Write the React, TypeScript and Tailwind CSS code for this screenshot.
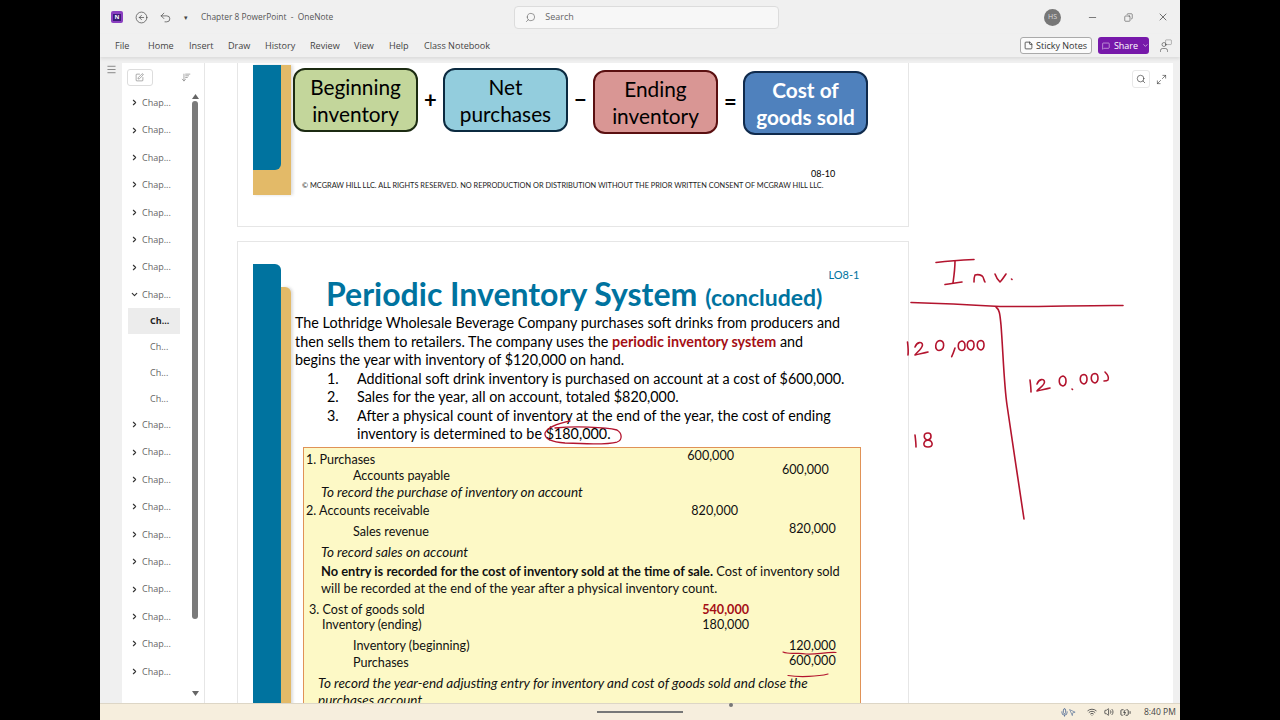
import React from "react";
import {
  CircleArrowLeft, Undo2, Search, Minus, Copy, X, Menu, SquarePen, ChevronRight, ChevronDown,
  ArrowDownWideNarrow, Maximize2, Mic, Navigation, Wifi, Volume2, BatteryCharging, StickyNote,
  MessageSquare, User,
} from "lucide-react";

const UI = "font-['Open_Sans','Noto_Sans',sans-serif]";
const SL = "font-['Lato','Noto_Sans',sans-serif]";

const tabs: [string, string][] = [
  ["File", "w-[33px]"], ["Home", "w-[41px]"], ["Insert", "w-[39px]"], ["Draw", "w-[37px]"], ["History", "w-[45px]"],
  ["Review", "w-[44px]"], ["View", "w-[35px]"], ["Help", "w-[35px]"], ["Class Notebook", "w-[68px]"],
];

function Section({ open, cls }: { open?: boolean; cls: string }) {
  return (
    <div className={`flex items-center ${cls}`}>
      <span className="w-[12px] flex justify-center">
        {open ? <ChevronDown size={9} strokeWidth={3} className="text-[#333]" /> : <ChevronRight size={9} strokeWidth={3} className="text-[#333]" />}
      </span>
      <span className="text-[9px] text-[#666] ml-[2px]">Chap...</span>
    </div>
  );
}

function Sub({ active }: { active?: boolean }) {
  return (
    <div className={`h-[26px] flex items-center pl-[22px] text-[9px] ${active ? "bg-[#ececec] font-bold text-[#222]" : "text-[#666]"}`}>Ch...</div>
  );
}

function Box({ a, b, cls }: { a: string; b: string; cls: string }) {
  return (
    <div className={`w-[125px] h-[64px] rounded-[12px] border-2 flex flex-col items-center justify-center text-[20.8px] leading-[27px] ${cls}`}>
      <span>{a}</span>
      <span>{b}</span>
    </div>
  );
}

function Row({ h, label, lc, d, dc, c, cc }: { h: string; label: React.ReactNode; lc: string; d?: string; dc?: string; c?: string; cc?: string }) {
  return (
    <div className={`flex items-start leading-[16px] whitespace-nowrap ${h}`}>
      <span className={`w-[360px] ${lc}`}>{label}</span>
      {d ? <span className={`w-[90px] text-right ${dc}`}>{d}</span> : null}
      {c ? <span className={`text-right ${cc}`}>{c}</span> : null}
    </div>
  );
}

function Ink() {
  return (
    <svg className="absolute inset-0 pointer-events-none" width="1280" height="720" viewBox="0 0 1280 720" fill="none" stroke="#b3142e" strokeWidth="1.6" strokeLinecap="round" strokeLinejoin="round">
      <path d="M936 262.5 C948 261 962 260 974 259.5" />
      <path d="M955 261 C955 268 954 276 953 283" />
      <path d="M945 284.5 C951 283.5 956 283 962 282" />
      <path d="M974 282 C974 278 974.5 276 975 275 C978 274 982 275 983 277 C984 279 984 281 985 282" />
      <path d="M995 274 C996 277 998 280 1000 282 C1002 280 1004 277 1006 274" />
      <path d="M1011.5 279 L1012 279.5" />
      <path d="M911 302.5 C930 303 975 305 1000 306.5 C1040 307 1090 305 1123 305.5" />
      <path d="M996 307 C1000 310 1000 316 1001 325 C1003 350 1004 385 1007 405 C1012 440 1019 485 1024 519" />
      <path d="M907.5 342 C908 346 908.5 351 908 355" />
      <path d="M915 347 C917 342 922 341 922.5 345 C922 349 917 352 915 355 C919 354 924 353 928 352" />
      <path d="M940 340.5 C935 341 934 350 939 350.5 C945 350 945 341 940 340.5Z" />
      <path d="M955 348 C954 351 953 354 951.7 356.7" />
      <path d="M962 341 C957 342 957 350 962 350.5 C966 350 966 342 962 341Z" />
      <path d="M971 340.5 C966 341 966 349 971 350 C975 349 975 341 971 340.5Z" />
      <path d="M981 340.5 C976 341 976 349 981 350 C985 349 985 341 981 340.5Z" />
      <path d="M1030 380 C1030.5 384 1031 388 1031 392" />
      <path d="M1037 384 C1039 379 1044 378 1044.5 382 C1044 386 1039 388 1037 391 C1041 390 1046 389 1050 388" />
      <path d="M1063 376 C1058 377 1058 385 1063 386 C1067 385 1067 377 1063 376Z" />
      <path d="M1072 389 L1072.5 389.5" />
      <path d="M1084 374.5 C1079 375 1079 383 1084 384 C1088 383 1088 375 1084 374.5Z" />
      <path d="M1095 373.5 C1090 374 1090 382 1095 383 C1099 382 1099 374 1095 373.5Z" />
      <path d="M1105 372 C1108 375 1109 378 1108 380 C1107 381 1105 381 1104 381" />
      <path d="M915 435 C915.5 439 916 443 916 447" />
      <path d="M928 433 C923 433 923 439 928 440 C933 441 934 447 928 447 C922 447 923 441 928 440 C932 439 932 433 928 433Z" />
      <path d="M570 421 C560 423 548 427 545 433 C544 439 552 442 565 443 C585 444 610 444 617 442 C623 440 622 433 617 430 C605 427 575 426 555 428" strokeWidth="1.3" />
      <path d="M783 652 C790 655 798 652 806 654 C815 655 825 652 836 652.5" strokeWidth="1.2" />
      <path d="M788 675.5 C800 677.5 818 676.5 828 674" strokeWidth="1.2" />
    </svg>
  );
}

export default function App() {
  return (
    <div className="relative w-[1280px] h-[720px] bg-black flex justify-center overflow-hidden">
      <div className={`w-[1080px] h-[720px] flex flex-col bg-[#f0f0f0] overflow-hidden ${UI}`}>
        {/* Title bar */}
        <div className="h-[34px] flex items-center text-[#444]">
          <div className="ml-[11px] w-[12px] h-[12px] rounded-[2px] bg-[#8a3fc0] flex items-center justify-center">
            <span className="w-[8px] h-[7px] bg-[#3b1a78] text-white text-[6px] leading-[7px] font-bold text-center">N</span>
          </div>
          <CircleArrowLeft size={13} strokeWidth={1.3} className="ml-[12px]" />
          <Undo2 size={13} strokeWidth={1.3} className="ml-[11px]" />
          <span className="ml-[12px] text-[7px] leading-none">▾</span>
          <span className="ml-[13px] text-[8.4px] text-[#555] whitespace-pre">Chapter 8 PowerPoint  -  OneNote</span>
          <div className="ml-[181px] w-[265px] h-[23px] rounded-[4px] bg-[#f7f7f7] border border-[#dcdcdc] flex items-center">
            <Search size={11} strokeWidth={1.4} className="ml-[10px] -scale-x-100 text-[#666]" />
            <span className="ml-[9px] text-[9px] text-[#666]">Search</span>
          </div>
          <div className="ml-auto w-[17px] h-[17px] rounded-full bg-[#777] text-[#ddd] text-[7px] flex items-center justify-center">HS</div>
          <Minus size={11} strokeWidth={1.5} className="ml-[26px]" />
          <Copy size={9} strokeWidth={1.5} className="ml-[26px] -scale-x-100" />
          <X size={12} strokeWidth={1.5} className="ml-[24px] mr-[11px]" />
        </div>
        {/* Ribbon */}
        <div className="h-[23px] flex items-center text-[#444] text-[9.1px] pl-[15px] shadow-[0_2px_3px_#dcdcdc] relative">
          {tabs.map(([t, w]) => (
            <span key={t} className={`${w} whitespace-nowrap`}>{t}</span>
          ))}
          <div className="ml-auto h-[17px] w-[72px] rounded-[3px] border border-[#aaa] bg-[#fbfbfb] flex items-center text-[9px] text-[#333]">
            <StickyNote size={9} strokeWidth={2} className="ml-[3px] mr-[3px]" />
            Sticky Notes
          </div>
          <div className="ml-[6px] h-[17px] w-[51px] rounded-[3px] bg-[#7719aa] text-white flex items-center text-[9px]">
            <MessageSquare size={8} strokeWidth={1.5} className="ml-[4px] mr-[4px]" />
            Share
            <ChevronDown size={7} strokeWidth={2} className="ml-[4px]" />
          </div>
          <div className="ml-[9px] mr-[8px] w-[14px] h-[14px] relative">
            <User size={12} strokeWidth={1.2} className="absolute left-0 bottom-0" />
            <MessageSquare size={7} strokeWidth={1.2} className="absolute right-0 top-0" />
          </div>
        </div>
        {/* Body */}
        <div className="flex-1 flex min-h-0 pt-[6px]">
          <div className="w-[22px] shrink-0 pl-[6px] pt-[1px]">
            <Menu size={11} strokeWidth={1.3} className="text-[#444]" />
          </div>
          {/* Nav pane */}
          <div className="w-[83px] shrink-0 bg-white border-r border-[#e6e6e6] flex min-h-0">
            <div className="w-[69px] shrink-0 flex flex-col">
              <div className="h-[26px] flex items-start pt-[6px] shrink-0">
                <div className="ml-[5px] w-[28px] h-[17px] rounded-[3px] border border-[#ddd] flex items-center justify-center">
                  <SquarePen size={9} strokeWidth={1.3} className="text-[#555]" />
                </div>
                <ArrowDownWideNarrow size={11} strokeWidth={1.2} className="ml-[28px] mt-[3px] text-[#555]" />
              </div>
              <div className="ml-[6px] w-[52px] shrink-0">
                {Array.from({ length: 8 }).map((_, i) => (
                  <Section key={i} open={i === 7} cls="h-[27.4px]" />
                ))}
                <Sub active />
                <Sub />
                <Sub />
                <Sub />
                <div className="-mt-[1px]">
                  {Array.from({ length: 10 }).map((_, i) => (
                    <Section key={i} cls="h-[27.4px]" />
                  ))}
                </div>
              </div>
            </div>
            <div className="w-[6px] ml-[1px] flex flex-col items-center pt-[31px]">
              <svg width="7" height="5" viewBox="0 0 7 5" className="shrink-0"><polygon points="3.5,0 7,5 0,5" fill="#666" /></svg>
              <div className="w-[6px] h-[518px] rounded-full bg-[#7a7a7a] mt-[2px] shrink-0" />
              <svg width="7" height="5" viewBox="0 0 7 5" className="mt-[72px] shrink-0"><polygon points="0,0 7,0 3.5,5" fill="#666" /></svg>
            </div>
          </div>
          {/* Page */}
          <div className={`relative w-[968px] bg-white overflow-hidden pl-[32px] text-black ${SL}`}>
            <div className="w-[672px] h-[164px] border border-t-0 border-[#e6e6e6] flex pl-[15px] pt-[2px] relative">
              <div className="w-[38px] h-[130px] bg-[#e3ba68] shadow-[2px_0_3px_#ddd] shrink-0">
                <div className="w-[28px] h-[105px] bg-[#00739f] rounded-br-[6px]" />
              </div>
              <div className="ml-[2px] flex flex-col">
                <div className="flex items-start pt-[3px]">
                  <Box a="Beginning" b="inventory" cls="bg-[#c3d69b] border-[#1c2b12]" />
                  <span className="w-[25px] text-center text-[22px] font-bold leading-[64px]">+</span>
                  <Box a="Net" b="purchases" cls="bg-[#93cddd] border-[#0b2a40]" />
                  <span className="w-[25px] text-center text-[22px] font-bold leading-[64px]">−</span>
                  <div className="mt-[2px]"><Box a="Ending" b="inventory" cls="bg-[#d99694] border-[#5a0f10]" /></div>
                  <span className="w-[25px] text-center text-[22px] font-bold leading-[68px]">=</span>
                  <div className="mt-[3px]"><Box a="Cost of" b="goods sold" cls="bg-[#4f81bd] border-[#0f2a4c] text-white font-bold" /></div>
                </div>
                <div className="mt-[32px] pl-[518px] text-[9px] leading-[11px]">08-10</div>
                <div className="mt-[1px] pl-[9px] text-[7.36px] leading-[11px] whitespace-nowrap text-[#222]">© MCGRAW HILL LLC. ALL RIGHTS RESERVED. NO REPRODUCTION OR DISTRIBUTION WITHOUT THE PRIOR WRITTEN CONSENT OF MCGRAW HILL LLC.</div>
              </div>
            </div>
            <div className="mt-[14px] w-[672px] h-[600px] border border-[#e6e6e6] flex pl-[15px] pt-[22px]">
              <div className="w-[38px] flex shrink-0">
                <div className="w-[28px] bg-[#00739f] rounded-tr-[6px]" />
                <div className="w-[10px] mt-[23px] bg-[#e3ba68] rounded-tr-[6px] shadow-[2px_0_3px_#ddd]" />
              </div>
              <div className="flex flex-col">
                <div className="flex items-start h-[50px] whitespace-nowrap">
                  <span className="ml-[35px] mt-[7px] text-[32px] leading-[46px] font-bold text-[#00739f]">Periodic Inventory System</span>
                  <span className="ml-[8px] mt-[18px] text-[23px] leading-[30px] font-bold text-[#00739f]">(concluded)</span>
                  <span className="ml-[6px] mt-[3px] text-[11px] leading-[16px] text-[#00739f]">LO8-1</span>
                </div>
                <div className="ml-[4px] text-[14.35px] leading-[18.5px] whitespace-nowrap">
                  <div>The Lothridge Wholesale Beverage Company purchases soft drinks from producers and</div>
                  <div>then sells them to retailers. The company uses the <b className="text-[#a50f15]">periodic inventory system</b> and</div>
                  <div>begins the year with inventory of $120,000 on hand.</div>
                  <div className="flex pl-[32px]"><span className="w-[30px]">1.</span><span>Additional soft drink inventory is purchased on account at a cost of $600,000.</span></div>
                  <div className="flex pl-[32px]"><span className="w-[30px]">2.</span><span>Sales for the year, all on account, totaled $820,000.</span></div>
                  <div className="flex pl-[32px]"><span className="w-[30px]">3.</span><span>After a physical count of inventory at the end of the year, the cost of ending<br />inventory is determined to be $180,000.</span></div>
                </div>
                <div className="mt-[3px] ml-[12px] w-[558px] h-[300px] bg-[#fdf9c6] border border-[#e09257] text-[12.6px] text-[#111]">
                  <Row h="h-[20px]" label="1. Purchases" lc="mt-[4px] pl-[2px]" d="600,000" dc="-ml-[20px] mt-0" />
                  <Row h="h-[16px]" label="Accounts payable" lc="pl-[49px]" c="600,000" cc="ml-[118px] -mt-[6px]" />
                  <Row h="h-[16px]" label={<i className="text-[13.5px]">To record the purchase of inventory on account</i>} lc="pl-[17px]" />
                  <Row h="h-[19px]" label="2. Accounts receivable" lc="mt-[3px] pl-[2px]" d="820,000" dc="-ml-[16px] mt-[3px]" />
                  <Row h="h-[21px]" label="Sales revenue" lc="mt-[5px] pl-[49px]" c="820,000" cc="ml-[125px] mt-[2px]" />
                  <Row h="h-[20px]" label={<i className="text-[13.5px]">To record sales on account</i>} lc="mt-[4px] pl-[17px]" />
                  <div className="h-[19px] pt-[3px] pl-[17px] leading-[16px] whitespace-nowrap text-[12.85px]"><b>No entry is recorded for the cost of inventory sold at the time of sale.</b> Cost of inventory sold</div>
                  <div className="h-[17px] pt-[1px] pl-[17px] leading-[16px] whitespace-nowrap text-[12.85px]">will be recorded at the end of the year after a physical inventory count.</div>
                  <Row h="h-[22px]" label="3. Cost of goods sold" lc="mt-[6px] pl-[5px]" d="540,000" dc="-ml-[5px] mt-[6px] font-bold text-[#a50f15]" />
                  <Row h="h-[15px]" label="Inventory (ending)" lc="-mt-[1px] pl-[18px]" d="180,000" dc="-ml-[5px] -mt-[1px]" />
                  <Row h="h-[21px]" label="Inventory (beginning)" lc="mt-[5px] pl-[49px]" c="120,000" cc="ml-[125px] mt-[5px]" />
                  <Row h="h-[17px]" label="Purchases" lc="mt-[1px] pl-[49px]" c="600,000" cc="ml-[125px] -mt-[1px]" />
                  <div className="h-[20px] pt-[4px] pl-[14px] leading-[16px] whitespace-nowrap italic text-[13.5px]">To record the year-end adjusting entry for inventory and cost of goods sold and close the</div>
                  <div className="pt-[1px] pl-[14px] leading-[16px] whitespace-nowrap italic text-[13.5px]">purchases account</div>
                </div>
              </div>
            </div>
            <div className="absolute top-[7px] right-[6px] flex items-center">
              <div className="w-[18px] h-[18px] rounded-[3px] border border-[#e8e8e8] flex items-center justify-center"><Search size={10} strokeWidth={1.5} className="text-[#333]" /></div>
              <Maximize2 size={11} strokeWidth={1.3} className="ml-[6px] text-[#333]" />
            </div>
          </div>
          <div className="flex-1" />
        </div>
        {/* Taskbar */}
        <div className="relative h-[17px] shrink-0 bg-[#f6eedd] border-t border-[#ddd6c6] flex items-center text-[#444]">
          <div className="absolute -top-[1px] left-[629px] w-[4px] h-[4px] rounded-full bg-[#777]" />
          <div className="ml-[497px] w-[86px] h-[2px] bg-[#777]" />
          <Mic size={9} className="ml-[377px] text-[#44628f]" />
          <Navigation size={7} className="text-[#44628f] -rotate-90" />
          <Wifi size={10} className="ml-[11px]" />
          <Volume2 size={10} className="ml-[7px]" />
          <BatteryCharging size={11} className="ml-[6px]" />
          <span className="ml-[13px] text-[8.5px]">8:40 PM</span>
        </div>
      </div>
      <Ink />
    </div>
  );
}
